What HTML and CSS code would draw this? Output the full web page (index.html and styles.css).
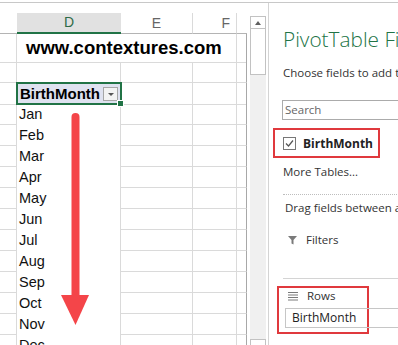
FILE: index.html
```html
<!DOCTYPE html>
<html lang="en">
<head>
  <meta charset="UTF-8">
  <meta name="viewport" content="width=device-width, initial-scale=1.0">
  <title>PivotTable Fields</title>
  <link rel="stylesheet" href="styles.css">
</head>
<body>
<div class="topbar"></div>
<div class="main">
  <div class="sheet-area">
    <div class="sheet">
      <div class="row hdr">
        <div class="c"></div>
        <div class="c d">D</div>
        <div class="c e">E</div>
        <div class="c f">F</div>
        <div class="c g"></div>
      </div>
      <div class="row site-row">
        <div class="c"></div>
        <div class="c d open"><span class="site">www.contextures.com</span></div>
        <div class="c e open"></div>
        <div class="c f"></div>
        <div class="c g"></div>
      </div>
      <div class="row">
        <div class="c"></div><div class="c d"></div><div class="c e"></div><div class="c f"></div><div class="c g"></div>
      </div>
      <div class="row">
        <div class="c"></div>
        <div class="c d pivot-head">
          <b>BirthMonth</b>
          <span class="dd"></span>
          <span class="handle"></span>
        </div>
        <div class="c e"></div><div class="c f"></div><div class="c g"></div>
      </div>
      <div class="row"><div class="c"></div><div class="c d item">Jan</div><div class="c e"></div><div class="c f"></div><div class="c g"></div></div>
      <div class="row"><div class="c"></div><div class="c d item">Feb</div><div class="c e"></div><div class="c f"></div><div class="c g"></div></div>
      <div class="row"><div class="c"></div><div class="c d item">Mar</div><div class="c e"></div><div class="c f"></div><div class="c g"></div></div>
      <div class="row"><div class="c"></div><div class="c d item">Apr</div><div class="c e"></div><div class="c f"></div><div class="c g"></div></div>
      <div class="row"><div class="c"></div><div class="c d item">May</div><div class="c e"></div><div class="c f"></div><div class="c g"></div></div>
      <div class="row"><div class="c"></div><div class="c d item">Jun</div><div class="c e"></div><div class="c f"></div><div class="c g"></div></div>
      <div class="row"><div class="c"></div><div class="c d item">Jul</div><div class="c e"></div><div class="c f"></div><div class="c g"></div></div>
      <div class="row"><div class="c"></div><div class="c d item">Aug</div><div class="c e"></div><div class="c f"></div><div class="c g"></div></div>
      <div class="row"><div class="c"></div><div class="c d item">Sep</div><div class="c e"></div><div class="c f"></div><div class="c g"></div></div>
      <div class="row"><div class="c"></div><div class="c d item">Oct</div><div class="c e"></div><div class="c f"></div><div class="c g"></div></div>
      <div class="row"><div class="c"></div><div class="c d item">Nov</div><div class="c e"></div><div class="c f"></div><div class="c g"></div></div>
      <div class="row"><div class="c"></div><div class="c d item">Dec</div><div class="c e"></div><div class="c f"></div><div class="c g"></div></div>
    </div>

    <div class="scrollbar">
      <div class="sb-btn"><span class="up"></span></div>
      <div class="sb-thumb"></div>
      <div class="sb-track"></div>
      <div class="sb-btn"></div>
    </div>
  </div>

  <div class="panel">
    <div class="p-title">PivotTable Fields</div>
    <div class="p-text choose">Choose fields to add to report:</div>
    <div class="search">Search</div>

    <div class="mark field-pick">
      <span class="check">
        <svg width="9" height="9" viewBox="0 0 9 9"><path d="M1 4.5 L3.5 7 L8 1.5" fill="none" stroke="#555" stroke-width="1.2"/></svg>
      </span>
      <b>BirthMonth</b>
    </div>

    <div class="p-text more">More Tables...</div>
    <div class="dots"></div>
    <div class="p-text drag">Drag fields between areas below:</div>

    <div class="area-label filters">
      <svg width="9" height="9" viewBox="0 0 9 9"><path d="M0 0 H9 L5.5 4 V8.5 L3.5 7.5 V4 Z" fill="#7a7a7a"/></svg>
      Filters
    </div>
    <div class="sep"></div>

    <div class="mark rows-box">
      <div class="area-label">
        <svg width="10" height="9" viewBox="0 0 10 9"><path d="M0 0.5 H10 M0 3 H10 M0 5.5 H10 M0 8 H10" stroke="#7a7a7a" stroke-width="1"/></svg>
        Rows
      </div>
      <div class="pill">BirthMonth</div>
    </div>
  </div>
</div>

<svg class="arrow" width="40" height="220" viewBox="0 0 40 220">
  <path d="M16.5 4 V188" stroke="#f44549" stroke-width="8" stroke-linecap="round"/>
  <path d="M2 182 H30 L16.5 212 Z" fill="#f44549"/>
</svg>
</body>
</html>
```

FILE: styles.css
```css
body {
  margin: 0;
  width: 398px;
  height: 345px;
  overflow: hidden;
  background: #fff;
  position: relative;
  font-family: "Liberation Sans", Arial, sans-serif;
}

.topbar {
  height: 2px;
  border-bottom: 1px solid #c8c8c8;
}

.main {
  display: flex;
  height: 342px;
}

/* sheet + scrollbar */
.sheet-area {
  display: flex;
  width: 268px;
  flex: none;
  padding-top: 10px;
  box-sizing: border-box;
  overflow: hidden;
}

.sheet {
  width: 247px;
  flex: none;
}

.row {
  display: grid;
  grid-template-columns: 17px 104px 72px 44px 10px;
  height: 21px;
}

.c {
  box-sizing: border-box;
  border-right: 1px solid #dadada;
  border-bottom: 1px solid #dadada;
}

.c.g {
  border-right-color: #a8a8a8;
}

.hdr .c {
  border-bottom-color: #b4b4b4;
  font-size: 14px;
  color: #666;
  text-align: center;
  line-height: 20px;
}

.hdr .c:first-child,
.hdr .c.g {
  border-right: none;
}

.hdr .d {
  background: #e1e1e1;
  color: #2e6b47;
  border-right: none;
  border-bottom: 2px solid #217346;
  line-height: 19px;
}

.hdr .f {
  text-align: right;
  padding-right: 6px;
}

.site-row {
  height: 28px;
}

.c.open {
  border-right: none;
}

.site {
  display: block;
  font-weight: bold;
  font-size: 18.5px;
  line-height: 28px;
  padding-left: 9px;
  white-space: nowrap;
  color: #000;
}

.pivot-head {
  position: relative;
  display: flex;
  align-items: center;
  justify-content: space-between;
  background: #dfe2f0;
  border: 2px solid #217346;
  margin: -1px 0 0 -1px;
  width: 106px;
  height: 23px;
  padding: 0 2px 0 2px;
  font-size: 15px;
  z-index: 1;
}

.dd {
  width: 13px;
  height: 12px;
  border: 1px solid #a6a6a6;
  background: #f3f3f3;
  position: relative;
}

.dd::after {
  content: "";
  position: absolute;
  left: 4px;
  top: 5px;
  border-left: 3px solid transparent;
  border-right: 3px solid transparent;
  border-top: 3px solid #555;
}

.handle {
  position: absolute;
  right: -4px;
  bottom: -4px;
  width: 5px;
  height: 5px;
  background: #217346;
  border: 1px solid #fff;
}

.c.item {
  border-bottom: none;
  font-size: 14.5px;
  line-height: 21px;
  padding-left: 2px;
  color: #111;
}

.scrollbar {
  width: 16px;
  margin: 3px 0 0 3px;
  display: flex;
  flex-direction: column;
  background: #f0f0f0;
  flex: none;
}

.sb-btn {
  height: 13px;
  border: 1px solid #c2c2c2;
  background: #fff;
  box-sizing: border-box;
  position: relative;
  flex: none;
}

.up {
  position: absolute;
  left: 4px;
  top: 4px;
  border-left: 3px solid transparent;
  border-right: 3px solid transparent;
  border-bottom: 4px solid #606060;
}

.sb-thumb {
  height: 46px;
  border: 1px solid #c2c2c2;
  border-top: none;
  background: #fff;
  box-sizing: border-box;
  flex: none;
}

.sb-track {
  height: 264px;
  flex: none;
}

/* field list panel */
.panel {
  flex: 1;
  border-left: 1px solid #d4d4d4;
  padding: 21px 0 0 14px;
  overflow: hidden;
  white-space: nowrap;
  font-family: "Open Sans", "Noto Sans", sans-serif;
  font-size: 11.5px;
  color: #333;
}

.p-title {
  font-size: 20.8px;
  font-weight: 300;
  color: #217346;
  line-height: 28px;
  padding-top: 1px;
  height: 28px;
  box-sizing: border-box;
}

.p-text {
  line-height: 16px;
}

.choose {
  margin-top: 13px;
}

.search {
  margin: 19px 0 0 -1px;
  width: 140px;
  height: 20px;
  border: 1px solid #ababab;
  box-sizing: border-box;
  padding-left: 2px;
  line-height: 18px;
  color: #666;
}

.mark {
  border: 2px solid #e0393d;
  box-sizing: border-box;
}

.field-pick {
  margin: 8px 0 0 -10px;
  width: 107px;
  height: 30px;
  display: flex;
  align-items: center;
  gap: 7px;
  padding-left: 8px;
  font-size: 12px;
  color: #222;
}

.check {
  width: 11px;
  height: 11px;
  border: 1px solid #777;
  display: flex;
  align-items: center;
  justify-content: center;
}

.more {
  margin-top: 6px;
}

.dots {
  margin-top: 14px;
  border-top: 1px dotted #bdbdbd;
  width: 130px;
}

.drag {
  margin: 5px 0 0 2px;
}

.area-label {
  display: flex;
  align-items: center;
  gap: 9px;
  padding-left: 5px;
  line-height: 16px;
}

.filters {
  margin-top: 16px;
}

.sep {
  margin-top: 30px;
  border-top: 1px solid #d4d4d4;
  width: 130px;
}

.rows-box {
  margin: 7px 0 0 -6px;
  width: 92px;
  height: 48px;
  padding: 0 0 0 6px;
}

.rows-box .area-label {
  padding-left: 3px;
}

.pill {
  margin-top: 4px;
  width: 120px;
  height: 20px;
  border: 1px solid #c6c6c6;
  box-sizing: border-box;
  padding-left: 6px;
  line-height: 18px;
  font-size: 12px;
  color: #222;
}

.arrow {
  position: absolute;
  left: 59px;
  top: 113px;
}
```
